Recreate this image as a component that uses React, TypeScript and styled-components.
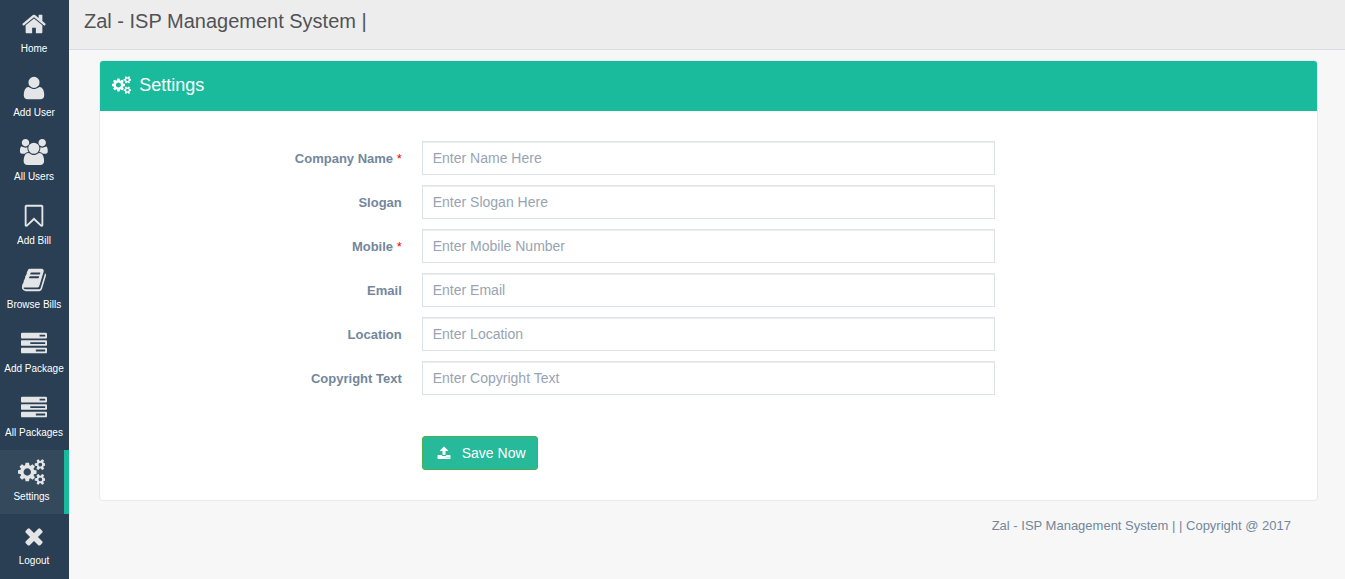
import React from "react";
import styled, { createGlobalStyle, css } from "styled-components";

const color = {
  navy: "#2a3f54",
  navyActive: "#35495d",
  green: "#1abb9c",
  saveGreen: "#26b99a",
  text: "#73879c",
  page: "#f7f7f7",
};

const GlobalStyle = createGlobalStyle`
  *, *::before, *::after { box-sizing: border-box; }
  body {
    margin: 0;
    background: ${color.page};
    color: ${color.text};
    font-family: "Liberation Sans", Arial, Helvetica, sans-serif;
    font-size: 13px;
    line-height: 20px;
  }
`;

interface Glyph {
  width: number;
  path: string;
}

const glyphs: Record<string, Glyph> = {
  home: {
    width: 1792,
    path: "M1472 992v480q0 26-19 45t-45 19h-384v-384h-256v384h-384q-26 0-45-19t-19-45v-480q0-1 .5-3t.5-3l575-474 575 474q1 2 1 6zm223-69l-62 74q-8 9-21 11h-3q-13 0-21-7l-692-577-692 577q-12 8-24 7-13-2-21-11l-62-74q-8-10-7-23.5t11-21.5l719-599q32-26 76-26t76 26l244 204v-195q0-14 9-23t23-9h192q14 0 23 9t9 23v408l219 182q10 8 11 21.5t-7 23.5z",
  },
  user: {
    width: 1792,
    path: "M1600 1405q0 120-73 189.5t-194 69.5h-874q-121 0-194-69.5t-73-189.5q0-53 3.5-103.5t14-109 26.5-108.5 43-97.5 62-81 85.5-53.5 111.5-20q9 0 42 21.5t74.5 48 108 48 133.5 21.5 133.5-21.5 108-48 74.5-48 42-21.5q61 0 111.5 20t85.5 53.5 62 81 43 97.5 26.5 108.5 14 109 3.5 103.5zm-320-893q0 159-112.5 271.5t-271.5 112.5-271.5-112.5-112.5-271.5 112.5-271.5 271.5-112.5 271.5 112.5 112.5 271.5z",
  },
  users: {
    width: 2048,
    path: "M657 896q-162 5-265 128h-134q-82 0-138-40.5t-56-118.5q0-353 124-353 6 0 43.5 21t97.5 42.5 119 21.5q67 0 133-23-5 37-5 66 0 139 81 256zm1071 637q0 120-73 189.5t-194 69.5h-874q-121 0-194-69.5t-73-189.5q0-53 3.5-103.5t14-109 26.5-108.5 43-97.5 62-81 85.5-53.5 111.5-20q10 0 43 21.5t73 48 107 48 135 21.5 135-21.5 107-48 73-48 43-21.5q61 0 111.5 20t85.5 53.5 62 81 43 97.5 26.5 108.5 14 109 3.5 103.5zm-1024-1277q0 106-75 181t-181 75-181-75-75-181 75-181 181-75 181 75 75 181zm704 384q0 159-112.5 271.5t-271.5 112.5-271.5-112.5-112.5-271.5 112.5-271.5 271.5-112.5 271.5 112.5 112.5 271.5zm576 225q0 78-56 118.5t-138 40.5h-134q-103-123-265-128 81-117 81-256 0-29-5-66 66 23 133 23 59 0 119-21.5t97.5-42.5 43.5-21q124 0 124 353zm-128-609q0 106-75 181t-181 75-181-75-75-181 75-181 181-75 181 75 75 181z",
  },
  bookmark: {
    width: 1792,
    path: "M1408 256h-1024v1242l423-406 89-85 89 85 423 406v-1242zm12-128q23 0 44 9 33 13 52.5 41t19.5 62v1289q0 34-19.5 62t-52.5 41q-19 8-44 8-48 0-83-32l-441-424-441 424q-36 33-83 33-23 0-44-9-33-13-52.5-41t-19.5-62v-1289q0-34 19.5-62t52.5-41q21-9 44-9h1048z",
  },
  book: {
    width: 1792,
    path: "M1703 478q40 57 18 129l-275 906q-19 64-76.5 107.5t-122.5 43.5h-923q-77 0-148.5-53.5t-99.5-131.5q-24-67-2-127 0-4 3-27t4-37q1-8-3-21.5t-3-19.5q2-11 8-21t16.5-23.5 16.5-23.5q23-38 45-91.5t30-91.5q3-10 .5-30t-.5-28q3-11 17-28t17-23q21-36 42-92t25-90q1-9-2.5-32t.5-28q4-13 22-30.5t22-22.5q19-26 42.5-84.5t27.5-96.5q1-8-3-25.5t-2-26.5q2-8 9-18t18-23 17-21q8-12 16.5-30.5t15-35 16-36 19.5-32 26.5-23.5 36-11.5 47.5 5.5l-1 3q38-9 51-9h761q74 0 114 56t18 130l-274 906q-36 119-71.5 153.5t-128.5 34.5h-869q-27 0-38 15-11 16-1 43 24 70 144 70h923q29 0 56-15.5t35-41.5l300-987q7-22 5-57 38 15 59 43zm-1064 2q-4 13 2 22.5t20 9.5h608q13 0 25.5-9.5t16.5-22.5l21-64q4-13-2-22.5t-20-9.5h-608q-13 0-25.5 9.5t-16.5 22.5zm-83 256q-4 13 2 22.5t20 9.5h608q13 0 25.5-9.5t16.5-22.5l21-64q4-13-2-22.5t-20-9.5h-608q-13 0-25.5 9.5t-16.5 22.5z",
  },
  tasks: {
    width: 1792,
    path: "M1024 1408h640v-128h-640v128zm-384-512h1024v-128h-1024v128zm640-512h384v-128h-384v128zm512 832v256q0 26-19 45t-45 19h-1664q-26 0-45-19t-19-45v-256q0-26 19-45t45-19h1664q26 0 45 19t19 45zm0-512v256q0 26-19 45t-45 19h-1664q-26 0-45-19t-19-45v-256q0-26 19-45t45-19h1664q26 0 45 19t19 45zm0-512v256q0 26-19 45t-45 19h-1664q-26 0-45-19t-19-45v-256q0-26 19-45t45-19h1664q26 0 45 19t19 45z",
  },
  cogs: {
    width: 1920,
    path: "M896 896q0-106-75-181t-181-75-181 75-75 181 75 181 181 75 181-75 75-181zm768 512q0-52-38-90t-90-38-90 38-38 90q0 53 37.5 90.5t90.5 37.5 90.5-37.5 37.5-90.5zm0-1024q0-52-38-90t-90-38-90 38-38 90q0 53 37.5 90.5t90.5 37.5 90.5-37.5 37.5-90.5zm-384 421v185q0 10-7 19.5t-16 10.5l-155 24q-11 35-32 76 34 48 90 115 7 11 7 20 0 12-7 19-23 30-82.5 89.5t-78.5 59.5q-11 0-21-7l-115-90q-37 19-77 31-11 108-23 155-7 24-30 24h-186q-11 0-20-7.5t-10-17.5l-23-153q-34-10-75-31l-118 89q-7 7-20 7-11 0-21-8-144-133-144-160 0-9 7-19 10-14 41-53t47-61q-23-44-35-82l-152-24q-10-1-17-9.5t-7-19.5v-185q0-10 7-19.5t16-10.5l155-24q11-35 32-76-34-48-90-115-7-11-7-20 0-12 7-20 22-30 82-89t79-59q11 0 21 7l115 90q34-18 77-32 11-108 23-154 7-24 30-24h186q11 0 20 7.5t10 17.5l23 153q34 10 75 31l118-89q8-7 20-7 11 0 21 8 144 133 144 160 0 8-7 19-12 16-42 54t-45 60q23 48 34 82l152 23q10 2 17 10.5t7 19.5zm640 533v140q0 16-149 31-12 27-30 52 51 113 51 138 0 4-4 7-122 71-124 71-8 0-46-47t-52-68q-20 2-30 2t-30-2q-14 21-52 68t-46 47q-2 0-124-71-4-3-4-7 0-25 51-138-18-25-30-52-149-15-149-31v-140q0-16 149-31 13-29 30-52-51-113-51-138 0-4 4-7 4-2 35-20t59-34 30-16q8 0 46 46.5t52 67.5q20-2 30-2t30 2q51-71 92-112l6-2q4 0 124 70 4 3 4 7 0 25-51 138 17 23 30 52 149 15 149 31zm0-1024v140q0 16-149 31-12 27-30 52 51 113 51 138 0 4-4 7-122 71-124 71-8 0-46-47t-52-68q-20 2-30 2t-30-2q-14 21-52 68t-46 47q-2 0-124-71-4-3-4-7 0-25 51-138-18-25-30-52-149-15-149-31v-140q0-16 149-31 13-29 30-52-51-113-51-138 0-4 4-7 4-2 35-20t59-34 30-16q8 0 46 46.5t52 67.5q20-2 30-2t30 2q51-71 92-112l6-2q4 0 124 70 4 3 4 7 0 25-51 138 17 23 30 52 149 15 149 31z",
  },
  times: {
    width: 1792,
    path: "M1490 1322q0 40-28 68l-136 136q-28 28-68 28t-68-28l-294-294-294 294q-28 28-68 28t-68-28l-136-136q-28-28-28-68t28-68l294-294-294-294q-28-28-28-68t28-68l136-136q28-28 68-28t68 28l294 294 294-294q28-28 68-28t68 28l136 136q28 28 28 68t-28 68l-294 294 294 294q28 28 28 68z",
  },
  upload: {
    width: 1792,
    path: "M1344 1472q0-26-19-45t-45-19-45 19-19 45 19 45 45 19 45-19 19-45zm256 0q0-26-19-45t-45-19-45 19-19 45 19 45 45 19 45-19 19-45zm128-224v320q0 40-28 68t-68 28h-1472q-40 0-68-28t-28-68v-320q0-40 28-68t68-28h427q21 56 70.5 92t110.5 36h256q61 0 110.5-36t70.5-92h427q40 0 68 28t28 68zm-325-648q-17 40-59 40h-256v448q0 26-19 45t-45 19h-256q-26 0-45-19t-19-45v-448h-256q-42 0-59-40-17-39 14-69l448-448q18-19 45-19t45 19l448 448q31 30 14 69z",
  },
};

const IconSvg = styled.svg<{ $size: number }>`
  display: block;
  flex: none;
  height: ${(p) => p.$size}px;
  fill: currentColor;
`;

function Icon({ name, size }: { name: string; size: number }) {
  const glyph = glyphs[name];
  return (
    <IconSvg $size={size} viewBox={`0 0 ${glyph.width} 1792`} aria-hidden="true">
      <path d={glyph.path} />
    </IconSvg>
  );
}

const Shell = styled.div`
  display: flex;
  min-height: 100vh;
`;

const Sidebar = styled.nav`
  flex: none;
  width: 69px;
  padding-top: 2px;
  background: ${color.navy};
`;

const NavLink = styled.a<{ $active?: boolean }>`
  display: flex;
  flex-direction: column;
  align-items: center;
  gap: 4px;
  height: 64px;
  padding: 9px 1px 0 0;
  color: #fff;
  font-size: 10px;
  line-height: 15px;
  white-space: nowrap;
  text-decoration: none;
  ${(p) =>
    p.$active &&
    css`
      background: ${color.navyActive};
      border-right: 5px solid ${color.green};
    `}
`;

const NavIcon = styled.span`
  color: #e4e5e6;
`;

const Main = styled.div`
  flex: 1;
  min-width: 0;
`;

const TopBar = styled.header`
  height: 50px;
  padding: 9px 15px;
  background: #ededed;
  border-bottom: 1px solid #d9dee4;
`;

const SiteTitle = styled.h1`
  margin: 0;
  color: #515356;
  font-size: 20px;
  font-weight: 400;
  line-height: 24px;
`;

const Content = styled.main`
  padding: 10px 27px 0 30px;
`;

const Panel = styled.section`
  background: #fff;
  border: 1px solid #e6e9ed;
  border-radius: 4px;
  overflow: hidden;
`;

const PanelHeader = styled.header`
  display: flex;
  align-items: center;
  gap: 8px;
  height: 50px;
  padding: 0 12px 2px;
  background: ${color.green};
  color: #fff;
`;

const PanelTitle = styled.h2`
  margin: 0;
  font-size: 18px;
  font-weight: 400;
  line-height: 24px;
`;

const Form = styled.form`
  display: flex;
  flex-direction: column;
  gap: 10px;
  padding: 30px 15px;
`;

const FormRow = styled.div`
  display: grid;
  grid-template-columns: 1fr 2fr 1fr;
`;

const Label = styled.label`
  padding: 8px 10px 6px;
  font-weight: 700;
  text-align: right;
`;

const Required = styled.span`
  color: #f00;
  font-weight: 400;
`;

const Field = styled.div`
  grid-column: 2;
  padding: 0 10px;
`;

const TextInput = styled.input`
  display: block;
  width: 100%;
  height: 34px;
  padding: 6px 10px;
  border: 1px solid #dde2e8;
  border-radius: 0;
  background: #fff;
  box-shadow: inset 0 1px 1px rgba(0, 0, 0, 0.075);
  color: #555;
  font-family: inherit;
  font-size: 14px;
  &::placeholder {
    color: #98a4b4;
    opacity: 1;
  }
`;

const Actions = styled(FormRow)`
  padding-top: 31px;
`;

const SaveButton = styled.button`
  display: flex;
  align-items: center;
  gap: 11px;
  height: 34px;
  padding: 0 11px 0 14px;
  border: 1px solid #4cae4c;
  border-radius: 3px;
  background: ${color.saveGreen};
  color: #fff;
  font-family: inherit;
  font-size: 14px;
  line-height: 20px;
  white-space: nowrap;
`;

const Footer = styled.footer`
  padding: 15px 54px 20px;
  text-align: right;
`;

const navItems = [
  { label: "Home", icon: "home" },
  { label: "Add User", icon: "user" },
  { label: "All Users", icon: "users" },
  { label: "Add Bill", icon: "bookmark" },
  { label: "Browse Bills", icon: "book" },
  { label: "Add Package", icon: "tasks" },
  { label: "All Packages", icon: "tasks" },
  { label: "Settings", icon: "cogs", active: true },
  { label: "Logout", icon: "times" },
];

const fields = [
  { id: "company", label: "Company Name", hint: "Enter Name Here", required: true },
  { id: "slogan", label: "Slogan", hint: "Enter Slogan Here" },
  { id: "mobile", label: "Mobile", hint: "Enter Mobile Number", required: true },
  { id: "email", label: "Email", hint: "Enter Email" },
  { id: "location", label: "Location", hint: "Enter Location" },
  { id: "copyright", label: "Copyright Text", hint: "Enter Copyright Text" },
];

export default function App() {
  return (
    <>
      <GlobalStyle />
      <Shell>
        <Sidebar aria-label="Main">
          {navItems.map((item) => (
            <NavLink
              key={item.label}
              href="#"
              $active={item.active}
              aria-current={item.active ? "page" : undefined}
            >
              <NavIcon>
                <Icon name={item.icon} size={26} />
              </NavIcon>
              {item.label}
            </NavLink>
          ))}
        </Sidebar>
        <Main>
          <TopBar>
            <SiteTitle>Zal - ISP Management System |</SiteTitle>
          </TopBar>
          <Content>
            <Panel>
              <PanelHeader>
                <Icon name="cogs" size={18} />
                <PanelTitle>Settings</PanelTitle>
              </PanelHeader>
              <Form onSubmit={(event) => event.preventDefault()}>
                {fields.map((field) => (
                  <FormRow key={field.id}>
                    <Label htmlFor={field.id}>
                      {field.label}
                      {field.required && <Required> *</Required>}
                    </Label>
                    <Field>
                      <TextInput
                        id={field.id}
                        name={field.id}
                        type="text"
                        placeholder={field.hint}
                        required={field.required}
                      />
                    </Field>
                  </FormRow>
                ))}
                <Actions>
                  <Field>
                    <SaveButton type="submit">
                      <Icon name="upload" size={14} />
                      Save Now
                    </SaveButton>
                  </Field>
                </Actions>
              </Form>
            </Panel>
          </Content>
          <Footer>Zal - ISP Management System | | Copyright @ 2017</Footer>
        </Main>
      </Shell>
    </>
  );
}
